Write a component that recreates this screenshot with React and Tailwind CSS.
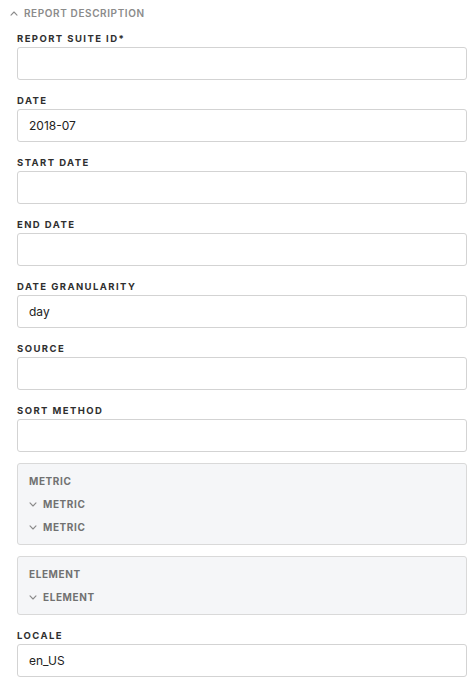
const font = { fontFamily: "Inter, 'Open Sans', sans-serif" };

const Chevron = ({ up = false, className = "" }) => (
  <svg
    className={className}
    width="8"
    height="5"
    viewBox="0 0 8 5"
    fill="none"
    stroke="currentColor"
    strokeWidth="1.1"
    strokeLinecap="round"
    strokeLinejoin="round"
  >
    {up ? <path d="M1 4.2L4 1l3 3.2" /> : <path d="M1 0.8L4 4l3-3.2" />}
  </svg>
);

const Field = ({ label, value, first }) => (
  <div>
    <div
      className={`${first ? "h-[21px]" : "h-[29px]"} flex items-end pb-[3px] text-[9.5px] leading-[11px] font-bold tracking-[0.15em] text-[#2f2f2f]`}
    >
      {label}
    </div>
    <div className="h-[33px] border border-[#d3d3d3] rounded-[3px] bg-white flex items-center px-[11px] text-[12px] text-[#222]">
      {value}
    </div>
  </div>
);

const Group = ({ title, items }) => (
  <div className="mt-[11px] border border-[#d9d9d9] rounded-[3px] bg-[#f5f6f8] px-[11px] pt-[10px] pb-[10px] text-[10px] font-bold tracking-[0.06em] text-[#717171]">
    <div className="h-[14px] leading-[14px]">{title}</div>
    {items.map((it, i) => (
      <div key={i} className="mt-[9px] h-[14px] leading-[14px] flex items-center">
        <Chevron className="mr-[6px] text-[#8a8a8a]" />
        {it}
      </div>
    ))}
  </div>
);

export default function App() {
  return (
    <div className="w-[474px] h-[689px] bg-white pl-[17px] pr-[7px] overflow-hidden" style={font}>
      <div className="h-[26px] flex items-center -ml-[7px] text-[10px] font-semibold tracking-[0.06em] text-[#8b8b8b]">
        <Chevron up className="mr-[6px] text-[#8b8b8b]" />
        REPORT DESCRIPTION
      </div>
      <Field first label="REPORT SUITE ID*" value="" />
      <Field label="DATE" value="2018-07" />
      <Field label="START DATE" value="" />
      <Field label="END DATE" value="" />
      <Field label="DATE GRANULARITY" value="day" />
      <Field label="SOURCE" value="" />
      <Field label="SORT METHOD" value="" />
      <Group title="METRIC" items={["METRIC", "METRIC"]} />
      <Group title="ELEMENT" items={["ELEMENT"]} />
      <Field label="LOCALE" value="en_US" />
    </div>
  );
}
